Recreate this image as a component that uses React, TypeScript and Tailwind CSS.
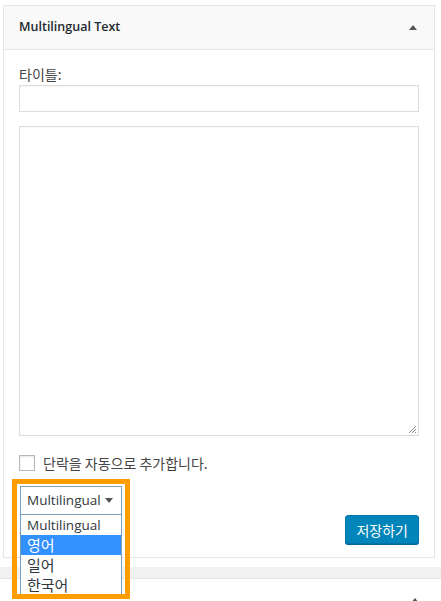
const Caret = ({ up = true, className = "" }: { up?: boolean; className?: string }) => (
  <svg width="8" height="5" viewBox="0 0 8 5" className={className}>
    <path d={up ? "M0 5 L4 0 L8 5 Z" : "M0 0 L4 5 L8 0 Z"} fill="#555" />
  </svg>
);

const options = ["Multilingual", "영어", "일어", "한국어"];
const ko = { fontFamily: '"Noto Sans CJK KR", sans-serif' };

export default function App() {
  return (
    <div
      className="relative w-[441px] h-[601px] bg-white overflow-hidden text-[#23282d]"
      style={{ fontFamily: '"Open Sans", "Noto Sans CJK KR", sans-serif' }}
    >
      <div className="pt-[5px] pl-[3px] w-[435px]">
        <div className="border border-[#e5e5e5] bg-white">
          <div className="h-[44px] bg-[#f9f9f9] border-b border-[#e5e5e5] flex items-center justify-between pl-[15px] pr-[17px]">
            <span className="text-[12.5px] font-semibold text-[#23282d]">Multilingual Text</span>
            <Caret />
          </div>
          <div className="px-[15px] pt-[15px] pb-[13px]">
            <label className="block text-[14px] leading-[19px] text-[#444]" style={ko}>
              타이틀:
            </label>
            <div className="mt-[1px] h-[27px] w-[400px] border border-[#ddd] shadow-[inset_0_1px_2px_rgba(0,0,0,0.04)]" />
            <div className="relative mt-[14px] h-[310px] w-[400px] border border-[#ddd] shadow-[inset_0_1px_2px_rgba(0,0,0,0.04)]">
              <svg width="9" height="9" viewBox="0 0 9 9" className="absolute right-[1px] bottom-[1px]">
                <path d="M1 8 L8 1 M4 8 L8 4 M7 8 L8 7" stroke="#888" strokeWidth="1" />
              </svg>
            </div>
            <div className="mt-[19px] flex items-center gap-[8px]">
              <div className="w-[16px] h-[16px] border border-[#b4b9be] bg-white shadow-[inset_0_1px_2px_rgba(0,0,0,0.1)]" />
              <span className="text-[14px] leading-[16px] text-[#444]" style={ko}>
                단락을 자동으로 추가합니다.
              </span>
            </div>
            <div className="mt-[15px] flex items-start justify-between">
              <div className="relative w-[103px]">
                <div className="h-[29px] ml-[1px] border border-[#7e9db9] flex items-center justify-between pl-[6px] pr-[8px] bg-white">
                  <span className="text-[13.5px] text-[#32373c]">Multilingual</span>
                  <Caret up={false} />
                </div>
                <span className="absolute left-0 top-[34px] text-[13px] text-[#555]">.</span>
              </div>
              <button
                className="mt-[29px] h-[29px] px-[10px] rounded-[3px] bg-[#0085ba] border border-[#0073aa] shadow-[0_1px_0_#006799] text-white text-[14px] leading-none"
                style={ko}
              >
                저장하기
              </button>
            </div>
          </div>
        </div>
      </div>

      <div className="mt-[9px] h-[12px] bg-[#f1f1f1] border-b border-[#e5e5e5]" />
      <div className="flex justify-end pr-[22px] pt-[19px]">
        <Caret />
      </div>

      {/* open dropdown list */}
      <div className="absolute left-[20px] top-[514px] w-[102px] border border-[#7e9db9] bg-white">
        {options.map((o, i) => (
          <div
            key={o}
            className={`h-[20px] leading-[20px] pl-[6px] ${i === 0 ? "text-[13.5px]" : "text-[15px]"} ${i === 1 ? "bg-[#3391ff] text-white" : "text-[#32373c]"}`}
          >
            {o}
          </div>
        ))}
      </div>

      {/* highlight annotation */}
      <div className="absolute left-[12px] top-[479px] w-[118px] h-[120px] border-[5px] border-[#ff9c00] pointer-events-none" />
    </div>
  );
}
